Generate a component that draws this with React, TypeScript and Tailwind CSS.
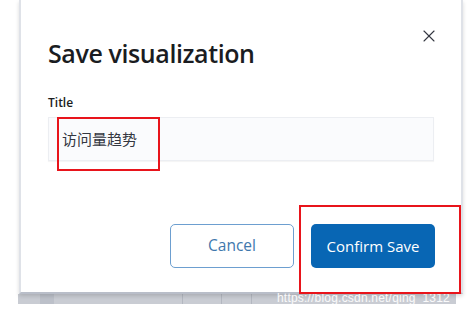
import { X } from "lucide-react";

export default function App() {
  return (
    <div className="relative w-[474px] h-[313px] overflow-hidden bg-white" style={{ fontFamily: "'Open Sans', 'Noto Sans CJK SC', sans-serif" }}>
      <div className="relative ml-[19px] w-[444px] h-[294px] bg-white border-x-2 border-b-2 border-x-[#dfe2e8] border-b-[#b9bec9] shadow-[0_2px_4px_rgba(0,0,0,0.15)]">
        <button className="absolute right-[22px] top-[26px] text-[#343741]">
          <X className="w-[20px] h-[20px]" strokeWidth={1.3} />
        </button>
        <div className="px-[27px] pt-[36px]">
          <h2 className="text-[25px] leading-[34px] font-semibold text-[#1a1c21] tracking-[-0.4px]">Save visualization</h2>
          <div className="mt-[26px]">
            <label className="block text-[12px] leading-[14px] font-semibold text-[#1a1c21]">Title</label>
            <div className="mt-[7px] h-[44px] w-[386px] flex items-center px-[13px] bg-[#fafbfd] border border-[#eceef2] shadow-[0_1px_1px_rgba(0,0,0,0.04)]">
              <span className="text-[15px] text-[#343741]" style={{ fontFamily: "'Noto Sans CJK SC', sans-serif" }}>访问量趋势</span>
            </div>
          </div>
        </div>
        <div className="flex justify-end gap-[17px] px-[26px] mt-[63px]">
          <button className="w-[124px] h-[44px] rounded-[5px] border border-[#6d9fd0] text-[#3f78ad] text-[15.5px]">Cancel</button>
          <button className="w-[124px] h-[44px] rounded-[5px] bg-[#0866b4] text-white text-[15px]">Confirm Save</button>
        </div>
      </div>
      <div className="mx-[18px] h-[10px] flex bg-[#c9ccd3]">
        <div className="w-[22px]" />
        <div className="w-[14px] bg-[#bcc0c9]" />
        <div className="w-[129px] border-r border-[#b3b7c0]" />
        <div className="w-[39px] border-r border-[#b3b7c0]" />
        <div className="w-[30px] border-r border-[#b3b7c0]" />
      </div>
      <div className="absolute left-[277px] top-[291px] text-[12px] leading-[14px] text-white/90 tracking-[0.2px]" style={{ fontFamily: "'Liberation Sans', sans-serif" }}>https://blog.csdn.net/qing_1312</div>
      <div className="absolute left-[57px] top-[117px] w-[103px] h-[54px] border-2 border-[#e8141b]" />
      <div className="absolute left-[299px] top-[205px] w-[162px] h-[89px] border-2 border-[#e8141b]" />
    </div>
  );
}
